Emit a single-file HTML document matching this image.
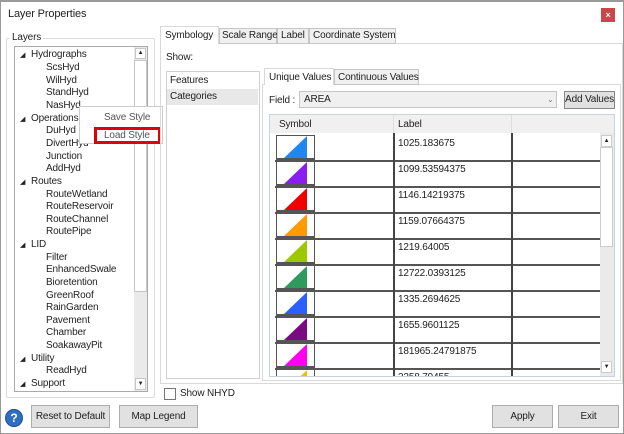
<!DOCTYPE html>
<html><head><meta charset="utf-8"><style>
*{box-sizing:border-box;margin:0;padding:0}
body{width:624px;height:434px;overflow:hidden;background:#fff;font-family:"Liberation Sans","DejaVu Sans",sans-serif;font-size:10px;letter-spacing:-0.15px;color:#222;position:relative}
.a{position:absolute}
.t{position:absolute;white-space:nowrap;line-height:13px}
.btn{position:absolute;background:#e1e1e1;border:1px solid #adadad;text-align:center;line-height:21px;font-size:10px;white-space:nowrap}
</style></head><body>
<div class="a" style="left:0;top:0;width:624px;height:434px;border:1px solid #9a9a9a;border-top:2px solid #9a9a9a"></div>
<div class="t" style="left:8px;top:8px;font-size:11px">Layer Properties</div>
<div class="a" style="left:601px;top:8px;width:14px;height:14px;background:#c9474a;color:#fff;font-size:9px;text-align:center;line-height:14px;font-weight:bold">×</div>

<div class="a" style="left:6px;top:38px;width:149px;height:360px;border:1px solid #dcdcdc;border-radius:2px"></div>
<div class="t" style="left:10px;top:31px;background:#fff;padding:0 2px">Layers</div>
<div class="a" style="left:14px;top:46px;width:134px;height:346px;border:1px solid #aaa"></div>
<div class="a" style="left:134px;top:47px;width:13px;height:344px;background:#eaeaea"></div>
<div class="a" style="left:134px;top:60px;width:13px;height:232px;background:#fff;border:1px solid #c6c6c6"></div>
<div class="a" style="left:135px;top:48px;width:11px;height:11px;border:1px solid #c6c6c6;background:#fff;font-size:6px;text-align:center;line-height:9px">▲</div>
<div class="a" style="left:135px;top:378px;width:11px;height:12px;border:1px solid #c6c6c6;background:#fff;font-size:6px;text-align:center;line-height:10px">▼</div>
<div style="position:absolute;left:0;top:0">
<div class="t" style="left:20px;top:49px;font-size:7px">◢</div><div class="t" style="left:31px;top:48px">Hydrographs</div>
<div class="t" style="left:46px;top:61px">ScsHyd</div>
<div class="t" style="left:46px;top:74px">WilHyd</div>
<div class="t" style="left:46px;top:86px">StandHyd</div>
<div class="t" style="left:46px;top:99px">NasHyd</div>
<div class="t" style="left:20px;top:113px;font-size:7px">◢</div><div class="t" style="left:31px;top:112px">Operations</div>
<div class="t" style="left:46px;top:124px">DuHyd</div>
<div class="t" style="left:46px;top:137px">DivertHyd</div>
<div class="t" style="left:46px;top:150px">Junction</div>
<div class="t" style="left:46px;top:162px">AddHyd</div>
<div class="t" style="left:20px;top:176px;font-size:7px">◢</div><div class="t" style="left:31px;top:175px">Routes</div>
<div class="t" style="left:46px;top:188px">RouteWetland</div>
<div class="t" style="left:46px;top:200px">RouteReservoir</div>
<div class="t" style="left:46px;top:213px">RouteChannel</div>
<div class="t" style="left:46px;top:225px">RoutePipe</div>
<div class="t" style="left:20px;top:239px;font-size:7px">◢</div><div class="t" style="left:31px;top:238px">LID</div>
<div class="t" style="left:46px;top:251px">Filter</div>
<div class="t" style="left:46px;top:263px">EnhancedSwale</div>
<div class="t" style="left:46px;top:276px">Bioretention</div>
<div class="t" style="left:46px;top:289px">GreenRoof</div>
<div class="t" style="left:46px;top:301px">RainGarden</div>
<div class="t" style="left:46px;top:314px">Pavement</div>
<div class="t" style="left:46px;top:326px">Chamber</div>
<div class="t" style="left:46px;top:339px">SoakawayPit</div>
<div class="t" style="left:20px;top:353px;font-size:7px">◢</div><div class="t" style="left:31px;top:352px">Utility</div>
<div class="t" style="left:46px;top:364px">ReadHyd</div>
<div class="t" style="left:20px;top:378px;font-size:7px">◢</div><div class="t" style="left:31px;top:377px">Support</div>
</div>

<div class="a" style="left:79px;top:106px;width:84px;height:38px;background:#fff;border:1px solid #ccc"></div>
<div class="t" style="left:104px;top:111px;color:#555">Save Style</div>
<div class="a" style="left:94px;top:127px;width:67px;height:17px;border:3px solid #e00000"></div>
<div class="t" style="left:104px;top:129px;color:#555">Load Style</div>

<div class="a" style="left:160px;top:43px;width:463px;height:341px;border:1px solid #d9d9d9"></div>
<div class="a" style="left:160px;top:26px;width:59px;height:18px;border:1px solid #d9d9d9;border-bottom:none;background:#fff"></div>
<div class="t" style="left:165px;top:29px">Symbology</div>
<div class="a" style="left:219px;top:28px;width:58px;height:16px;border:1px solid #c6c6c6;background:#f0f0f0"></div>
<div class="t" style="left:222px;top:29px">Scale Range</div>
<div class="a" style="left:277px;top:28px;width:32px;height:16px;border:1px solid #c6c6c6;background:#f0f0f0"></div>
<div class="t" style="left:281px;top:29px">Label</div>
<div class="a" style="left:309px;top:28px;width:87px;height:16px;border:1px solid #c6c6c6;background:#f0f0f0"></div>
<div class="t" style="left:313px;top:29px">Coordinate System</div>
<div class="t" style="left:166px;top:51px">Show:</div>

<div class="a" style="left:166px;top:71px;width:94px;height:308px;border:1px solid #d0d0d0"></div>
<div class="t" style="left:170px;top:74px">Features</div>
<div class="a" style="left:167px;top:89px;width:91px;height:16px;background:#e8e8e8"></div>
<div class="t" style="left:170px;top:90px">Categories</div>

<div class="a" style="left:262px;top:84px;width:359px;height:297px;border:1px solid #d9d9d9"></div>
<div class="a" style="left:264px;top:68px;width:70px;height:17px;border:1px solid #d9d9d9;border-bottom:none;background:#fff"></div>
<div class="t" style="left:269px;top:71px">Unique Values</div>
<div class="a" style="left:334px;top:69px;width:85px;height:16px;border:1px solid #c6c6c6;background:#f0f0f0"></div>
<div class="t" style="left:338px;top:71px">Continuous Values</div>
<div class="t" style="left:269px;top:94px">Field :</div>
<div class="a" style="left:299px;top:91px;width:258px;height:17px;border:1px solid #c6c6c6;background:#f0f0f0"></div>
<div class="t" style="left:304px;top:93px">AREA</div>
<div class="t" style="left:547px;top:93px;font-size:8px;color:#777">⌄</div>
<div class="btn" style="left:564px;top:91px;width:51px;height:18px;line-height:16px;border-color:#888">Add Values</div>

<div class="a" style="left:269px;top:114px;width:346px;height:263px;border:1px solid #c8d3de;overflow:hidden">
 <div class="a" style="left:5px;top:0;width:339px;height:261px;background:#fff"></div>
 <div class="a" style="left:0;top:0;width:344px;height:18px;background:#f0f0f0"></div>
 <div class="t" style="left:9px;top:3px">Symbol</div>
 <div class="t" style="left:128px;top:3px">Label</div>
 <div class="a" style="left:123px;top:0;width:1px;height:18px;background:#ddd"></div>
 <div class="a" style="left:241px;top:0;width:1px;height:18px;background:#ddd"></div>
 <div id="rows"></div>
 <div class="a" style="left:123px;top:18px;width:2px;height:245px;background:#444"></div>
 <div class="a" style="left:241px;top:18px;width:2px;height:245px;background:#444"></div>
 <div class="a" style="left:330px;top:18px;width:14px;height:245px;background:#eaeaea"></div>
 <div class="a" style="left:330px;top:32px;width:13px;height:100px;background:#fff;border:1px solid #ccc"></div>
 <div class="a" style="left:331px;top:20px;width:11px;height:12px;border:1px solid #ccc;background:#fff;font-size:6px;text-align:center;line-height:10px">▲</div>
 <div class="a" style="left:331px;top:246px;width:11px;height:12px;border:1px solid #ccc;background:#fff;font-size:6px;text-align:center;line-height:10px">▼</div>
</div>

<div class="a" style="left:164px;top:388px;width:12px;height:12px;border:1px solid #777;background:#fff"></div>
<div class="t" style="left:180px;top:387px">Show NHYD</div>

<div class="a" style="left:5px;top:409px;width:18px;height:18px;border-radius:50%;background:#2e6fc2;border:1px solid #1b4f96;color:#fff;font-weight:bold;font-size:12px;text-align:center;line-height:16px">?</div>
<div class="btn" style="left:31px;top:405px;width:79px;height:23px">Reset to Default</div>
<div class="btn" style="left:119px;top:405px;width:79px;height:23px">Map Legend</div>
<div class="btn" style="left:492px;top:405px;width:61px;height:23px">Apply</div>
<div class="btn" style="left:558px;top:405px;width:61px;height:23px">Exit</div>

<script>
var cols=["#1e88f0","#8a1ef0","#f00000","#ff9a00","#9cc800","#2e9a5e","#2b5fff","#7a0a82","#ff00f0","#f0c000"];
var labs=["1025.183675","1099.53594375","1146.14219375","1159.07664375","1219.64005","12722.0393125","1335.2694625","1655.9601125","181965.24791875","2258.79455"];
var h="";
for(var i=0;i<10;i++){var y=19+i*26;
h+='<div class="a" style="left:6px;top:'+(y+1)+'px;width:39px;height:25px;border:1px solid #555;border-bottom:2px solid #555;background:#fff"><svg width="37" height="22" style="position:absolute;left:0;top:0"><polygon points="7,22 30,0 30,22" fill="'+cols[i]+'"/></svg></div>';
h+='<div class="t" style="left:128px;top:'+(y+3)+'px">'+labs[i]+'</div>';
h+='<div class="a" style="left:5px;top:'+(y+26)+'px;width:326px;height:2px;background:#555"></div>';}
document.getElementById("rows").innerHTML=h;
</script>
</body></html>
